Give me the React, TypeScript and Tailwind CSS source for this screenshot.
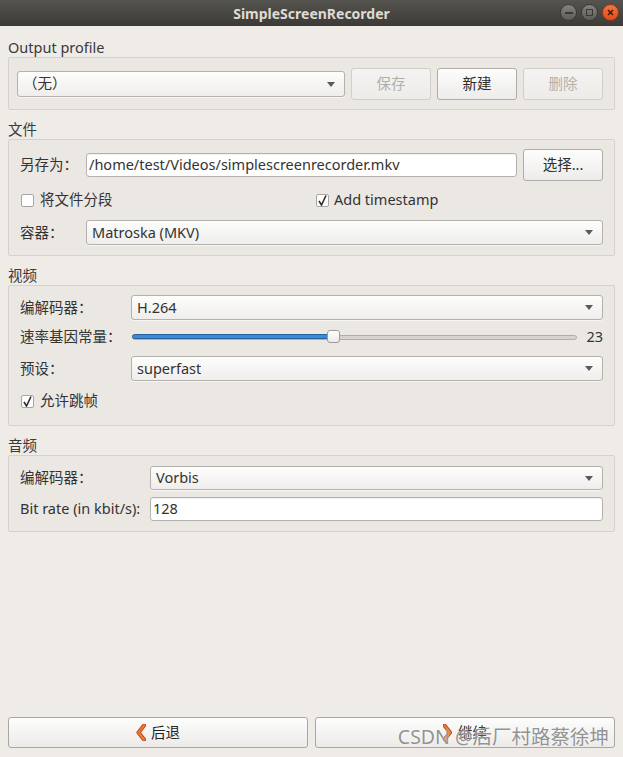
import React from 'react';

const FONT = "font-['Noto_Sans','Noto_Sans_CJK_SC',sans-serif]";

function Arrow() {
  return (
    <svg width="8" height="5" viewBox="0 0 8 5" className="shrink-0">
      <path d="M0 0 L8 0 L4 5 Z" fill="#5a5a5a" />
    </svg>
  );
}

function Combo({ value, h = 'h-[25px]', className = '' }: { value: string; h?: string; className?: string }) {
  return (
    <div
      className={`${h} ${className} flex items-center justify-between rounded-[3px] border border-[#b5b2ad] bg-linear-to-b from-[#fdfdfc] to-[#efeeec] pl-[5px] pr-[9px] shadow-[0_1px_0_rgba(255,255,255,0.6)]`}
    >
      <span className="truncate">{value}</span>
      <Arrow />
    </div>
  );
}

function Input({ value, className = '' }: { value: string; className?: string }) {
  return (
    <div
      className={`${className} flex h-[24px] items-center rounded-[3px] border border-[#b5b2ad] bg-white pl-[2px] shadow-[inset_0_1px_1px_rgba(0,0,0,0.06)]`}
    >
      <span className="truncate">{value}</span>
    </div>
  );
}

function Button({ label, disabled = false, className = '' }: { label: string; disabled?: boolean; className?: string }) {
  return (
    <div
      className={`${className} flex h-[32px] w-[80px] shrink-0 items-center justify-center rounded-[3px] border bg-linear-to-b ${
        disabled
          ? 'border-[#d2cec9] from-[#f4f3f1] to-[#eeece9] text-[#b3afa9]'
          : 'border-[#b0ada8] from-[#fdfdfd] to-[#edecea] text-[#2e2e2e]'
      }`}
    >
      {label}
    </div>
  );
}

function Check({ checked }: { checked: boolean }) {
  return (
    <div className="flex h-[13px] w-[13px] shrink-0 items-center justify-center rounded-[2px] border border-[#a9a6a1] bg-white">
      {checked && (
        <svg width="9" height="11" viewBox="0 0 9 11">
          <path d="M1 6 L3.5 10 L8 0.5" fill="none" stroke="#2f2f2f" strokeWidth="1.6" />
        </svg>
      )}
    </div>
  );
}

function GroupLabel({ text, mt }: { text: string; mt: string }) {
  return <div className={`${mt} mb-[1px] h-[18px] leading-[18px] text-[#3a3a3a]`}>{text}</div>;
}

function Group({ children, className = '' }: { children: React.ReactNode; className?: string }) {
  return (
    <div className={`${className} flex flex-col rounded-[2px] border border-[#d5d1cc] bg-[#ebe8e4]`}>{children}</div>
  );
}

function Chevron({ dir }: { dir: 'left' | 'right' }) {
  const d = dir === 'left' ? 'M8 1.5 L2.5 8.5 L8 15.5' : 'M1.5 1.5 L7 8.5 L1.5 15.5';
  return (
    <svg width="10" height="17" viewBox="0 0 10 17" className="shrink-0">
      <path d={d} fill="none" stroke="#b8430f" strokeWidth="4" strokeLinecap="round" strokeLinejoin="round" />
      <path d={d} fill="none" stroke="#ef7a35" strokeWidth="2.2" strokeLinecap="round" strokeLinejoin="round" />
    </svg>
  );
}

function TitleBar() {
  return (
    <div className="relative flex h-[26px] shrink-0 items-center justify-center bg-linear-to-b from-[#55544f] to-[#3b3a36]">
      <span className="text-[14px] font-bold text-[#dfdbd2]">SimpleScreenRecorder</span>
      <div className="absolute right-[4px] top-[4px] flex gap-[4px]">
        <div className="flex h-[17px] w-[17px] items-center justify-center rounded-full border border-[#3a3935] bg-linear-to-b from-[#85837d] to-[#5d5c57]">
          <div className="h-[2px] w-[8px] bg-[#3a3935]" />
        </div>
        <div className="flex h-[17px] w-[17px] items-center justify-center rounded-full border border-[#3a3935] bg-linear-to-b from-[#85837d] to-[#5d5c57]">
          <div className="h-[7px] w-[7px] border-[1.5px] border-[#3a3935]" />
        </div>
        <div className="flex h-[17px] w-[17px] items-center justify-center rounded-full border border-[#9a3512] bg-linear-to-b from-[#f4743f] to-[#df4c16]">
          <svg width="7" height="7" viewBox="0 0 7 7">
            <path d="M1 1 L6 6 M6 1 L1 6" stroke="#3b1a0c" strokeWidth="1.5" />
          </svg>
        </div>
      </div>
    </div>
  );
}

export default function App() {
  return (
    <div className={`${FONT} relative flex h-[757px] w-[623px] flex-col overflow-hidden bg-[#efebe7] text-[14.5px] text-[#333333]`}>
      <TitleBar />

      <div className="flex flex-col px-[8px]">
        <GroupLabel text="Output profile" mt="mt-[12px]" />
        <Group className="pb-[9px] pl-[8px] pr-[11px] pt-[10px]">
          <div className="flex items-center gap-[6px]">
            <Combo value="（无）" h="h-[26px]" className="flex-1" />
            <Button label="保存" disabled />
            <Button label="新建" />
            <Button label="删除" disabled />
          </div>
        </Group>

        <GroupLabel text="文件" mt="mt-[10px]" />
        <Group className="gap-[9px] pb-[10px] pl-[11px] pr-[11px] pt-[9px]">
          <div className="flex h-[31px] items-center">
            <span className="w-[66px] shrink-0">另存为：</span>
            <Input value="/home/test/Videos/simplescreenrecorder.mkv" className="flex-1" />
            <Button label="选择..." className="ml-[6px] h-[31px]" />
          </div>
          <div className="flex h-[22px] items-center">
            <div className="flex w-[296px] items-center gap-[6px] pl-[1px]">
              <Check checked={false} />
              <span>将文件分段</span>
            </div>
            <div className="flex items-center gap-[5px]">
              <Check checked />
              <span>Add timestamp</span>
            </div>
          </div>
          <div className="flex h-[25px] items-center">
            <span className="w-[66px] shrink-0">容器：</span>
            <Combo value="Matroska (MKV)" className="flex-1" />
          </div>
        </Group>

        <GroupLabel text="视频" mt="mt-[10px]" />
        <Group className="pb-[13px] pl-[11px] pr-[11px] pt-[9px]">
          <div className="flex h-[25px] items-center">
            <span className="w-[111px] shrink-0">编解码器：</span>
            <Combo value="H.264" className="flex-1" />
          </div>
          <div className="mt-[7px] flex h-[20px] items-center">
            <span className="w-[112px] shrink-0 whitespace-nowrap">速率基因常量：</span>
            <div className="relative flex h-[20px] flex-1 items-center">
              <div className="h-[5px] w-full rounded-full border border-[#b1aea9] bg-[#d6d3ce]" />
              <div className="absolute left-0 top-[7px] h-[5px] w-[200px] rounded-full border border-[#27639f] bg-[#3a8ad6]" />
              <div className="absolute left-[195px] top-[3px] h-[13px] w-[13px] rounded-[3px] border border-[#9f9c97] bg-linear-to-b from-white to-[#eceae7]" />
            </div>
            <span className="ml-[9px] w-[17px] text-right">23</span>
          </div>
          <div className="mt-[9px] flex h-[25px] items-center">
            <span className="w-[111px] shrink-0">预设：</span>
            <Combo value="superfast" className="flex-1" />
          </div>
          <div className="mt-[9px] flex h-[22px] items-center gap-[6px] pl-[1px]">
            <Check checked />
            <span>允许跳帧</span>
          </div>
        </Group>

        <GroupLabel text="音频" mt="mt-[10px]" />
        <Group className="gap-[7px] pb-[10px] pl-[11px] pr-[11px] pt-[10px]">
          <div className="flex h-[24px] items-center">
            <span className="w-[130px] shrink-0">编解码器：</span>
            <Combo value="Vorbis" h="h-[24px]" className="flex-1" />
          </div>
          <div className="flex h-[24px] items-center">
            <span className="w-[130px] shrink-0 whitespace-nowrap">Bit rate (in kbit/s):</span>
            <Input value="128" className="flex-1" />
          </div>
        </Group>
      </div>

      <div className="flex-1" />

      <div className="flex gap-[7px] px-[8px] pb-[9px]">
        <div className="flex h-[31px] flex-1 items-center justify-center gap-[5px] rounded-[3px] border border-[#a9a7a3] bg-linear-to-b from-[#fdfdfd] to-[#ecebe9] text-[#222]">
          <Chevron dir="left" />
          <span>后退</span>
        </div>
        <div className="flex h-[31px] flex-1 items-center justify-center gap-[5px] rounded-[3px] border border-[#a9a7a3] bg-linear-to-b from-[#fdfdfd] to-[#ecebe9] text-[#222]">
          <Chevron dir="right" />
          <span>继续</span>
        </div>
      </div>

      <div className="pointer-events-none absolute bottom-[8px] right-[14px] text-[19.5px] leading-[24px] text-[#939393] [text-shadow:0_0_2px_#ffffff]">
        CSDN @后厂村路蔡徐坤
      </div>
    </div>
  );
}
